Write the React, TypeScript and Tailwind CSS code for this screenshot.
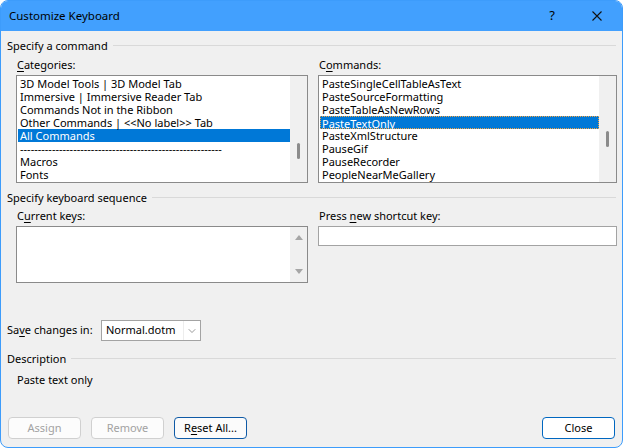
import { ChevronDown } from 'lucide-react'
import clsx from 'clsx'

const categories = [
  '3D Model Tools | 3D Model Tab',
  'Immersive | Immersive Reader Tab',
  'Commands Not in the Ribbon',
  'Other Commands | <<No label>> Tab',
  'All Commands',
  '---------------------------------------------------------',
  'Macros',
  'Fonts',
]

const commands = [
  'PasteSingleCellTableAsText',
  'PasteSourceFormatting',
  'PasteTableAsNewRows',
  'PasteTextOnly',
  'PasteXmlStructure',
  'PauseGif',
  'PauseRecorder',
  'PeopleNearMeGallery',
]

function GroupHeader({ title }: { title: string }) {
  return (
    <div className="flex items-center h-[15px] leading-[15px]">
      <span>{title}</span>
      <div className="flex-1 h-px bg-[#d9d9d9] ml-[5px]" />
    </div>
  )
}

function Label({ before, mnemonic, after }: { before: string; mnemonic: string; after: string }) {
  return (
    <div className="h-[15px] leading-[15px] pl-px whitespace-nowrap">
      {before}
      <span className="underline underline-offset-2">{mnemonic}</span>
      {after}
    </div>
  )
}

function ListBox({
  items,
  selected,
  focusRect,
  thumbClass,
}: {
  items: string[]
  selected: number
  focusRect?: boolean
  thumbClass: string
}) {
  return (
    <div className="h-[108px] border border-[#8a8a8a] bg-white flex overflow-hidden">
      <div className="flex-1 pt-px pl-px min-w-0">
        {items.map((item, i) => (
          <div
            key={item}
            className={clsx(
              'h-[13px] leading-[13px] pl-[2px] whitespace-nowrap',
              i === selected && 'bg-[#0078d7] text-white',
              i === selected && focusRect && 'border border-dotted border-[#f4a443] pl-px leading-[11px]',
            )}
          >
            {item}
          </div>
        ))}
      </div>
      <div className="w-[17px] bg-[#f0f0f0] relative">
        <div className={clsx('absolute left-[7px] w-[3px] h-[16px] bg-[#8b8b8b] rounded-full', thumbClass)} />
      </div>
    </div>
  )
}

function Button({ children, disabled, primary }: { children: React.ReactNode; disabled?: boolean; primary?: boolean }) {
  return (
    <button
      className={clsx(
        'w-[73px] h-[22px] rounded-[4px] border text-[11px] leading-[20px]',
        disabled && 'border-[#d0d0d0] bg-[#fcfcfc] text-[#a2a2a2]',
        !disabled && !primary && 'border-[#0f5aa6] bg-[#fbfbfb] text-black',
        primary && 'border-[#0067c0] bg-white text-black',
      )}
    >
      {children}
    </button>
  )
}

export default function App() {
  return (
    <div className="w-[623px] h-[448px] bg-white">
      <div className="w-full h-full rounded-[8px] border border-[#3d9cfb] bg-[#f0f0f0] overflow-hidden flex flex-col font-['Noto_Sans','Liberation_Sans',sans-serif] text-[11px] text-black">
        {/* title bar */}
        <div className="h-[30px] shrink-0 bg-[#42a0fe] flex items-center pl-[8px]">
          <span className="text-[11.5px]">Customize Keyboard</span>
          <span className="ml-auto text-[13px] mr-[37px]">?</span>
          <svg width="10" height="10" viewBox="0 0 10 10" className="mr-[20px]">
            <path d="M0.5 0.5 L9.5 9.5 M9.5 0.5 L0.5 9.5" stroke="#111" strokeWidth="1.1" />
          </svg>
        </div>

        {/* body */}
        <div className="flex-1 flex flex-col pl-[6px] pr-[6px]">
          <div className="mt-[7px]">
            <GroupHeader title="Specify a command" />
          </div>

          <div className="ml-[9px] mt-[4px] grid grid-cols-[292px_299px] gap-x-[10px]">
            <div>
              <Label before="" mnemonic="C" after="ategories:" />
              <div className="mt-[3px]">
                <ListBox items={categories} selected={4} thumbClass="top-[67px]" />
              </div>
            </div>
            <div>
              <Label before="C" mnemonic="o" after="mmands:" />
              <div className="mt-[3px]">
                <ListBox items={commands} selected={3} focusRect thumbClass="top-[55px]" />
              </div>
            </div>
          </div>

          <div className="mt-[7px]">
            <GroupHeader title="Specify keyboard sequence" />
          </div>

          <div className="ml-[9px] mt-[3px] grid grid-cols-[292px_299px] gap-x-[10px]">
            <div>
              <Label before="C" mnemonic="u" after="rrent keys:" />
              <div className="mt-[3px] h-[57px] border border-[#8a8a8a] bg-white flex">
                <div className="flex-1" />
                <div className="w-[17px] bg-[#f0f0f0] flex flex-col items-center justify-between py-[8px]">
                  <svg width="8" height="5" viewBox="0 0 8 5">
                    <path d="M4 0 L8 5 L0 5 Z" fill="#a6a6a6" />
                  </svg>
                  <svg width="8" height="5" viewBox="0 0 8 5">
                    <path d="M0 0 L8 0 L4 5 Z" fill="#a6a6a6" />
                  </svg>
                </div>
              </div>
            </div>
            <div>
              <Label before="Press " mnemonic="n" after="ew shortcut key:" />
              <div className="mt-[3px] h-[20px] border border-[#a3a3a3] bg-white" />
            </div>
          </div>

          <div className="mt-[37px] flex items-center">
            <span className="w-[94px] whitespace-nowrap">
              Sa<span className="underline underline-offset-2">v</span>e changes in:
            </span>
            <div className="w-[100px] h-[21px] border border-[#a3a3a3] bg-white flex items-center">
              <span className="pl-[4px] flex-1 whitespace-nowrap">Normal.dotm</span>
              <div className="w-[17px] h-full border-l border-[#ededed] flex items-center justify-center">
                <ChevronDown size={12} strokeWidth={1.2} color="#555" />
              </div>
            </div>
          </div>

          <div className="mt-[10px]">
            <GroupHeader title="Description" />
          </div>
          <div className="mt-[6px] ml-[10px] h-[15px] leading-[15px]">Paste text only</div>

          <div className="mt-[30px] flex pl-px pr-px">
            <div className="flex gap-[10px]">
              <Button disabled>Assign</Button>
              <Button disabled>Remove</Button>
              <Button>
                R<span className="underline underline-offset-2">e</span>set All...
              </Button>
            </div>
            <div className="ml-auto">
              <Button primary>Close</Button>
            </div>
          </div>
        </div>
      </div>
    </div>
  )
}
